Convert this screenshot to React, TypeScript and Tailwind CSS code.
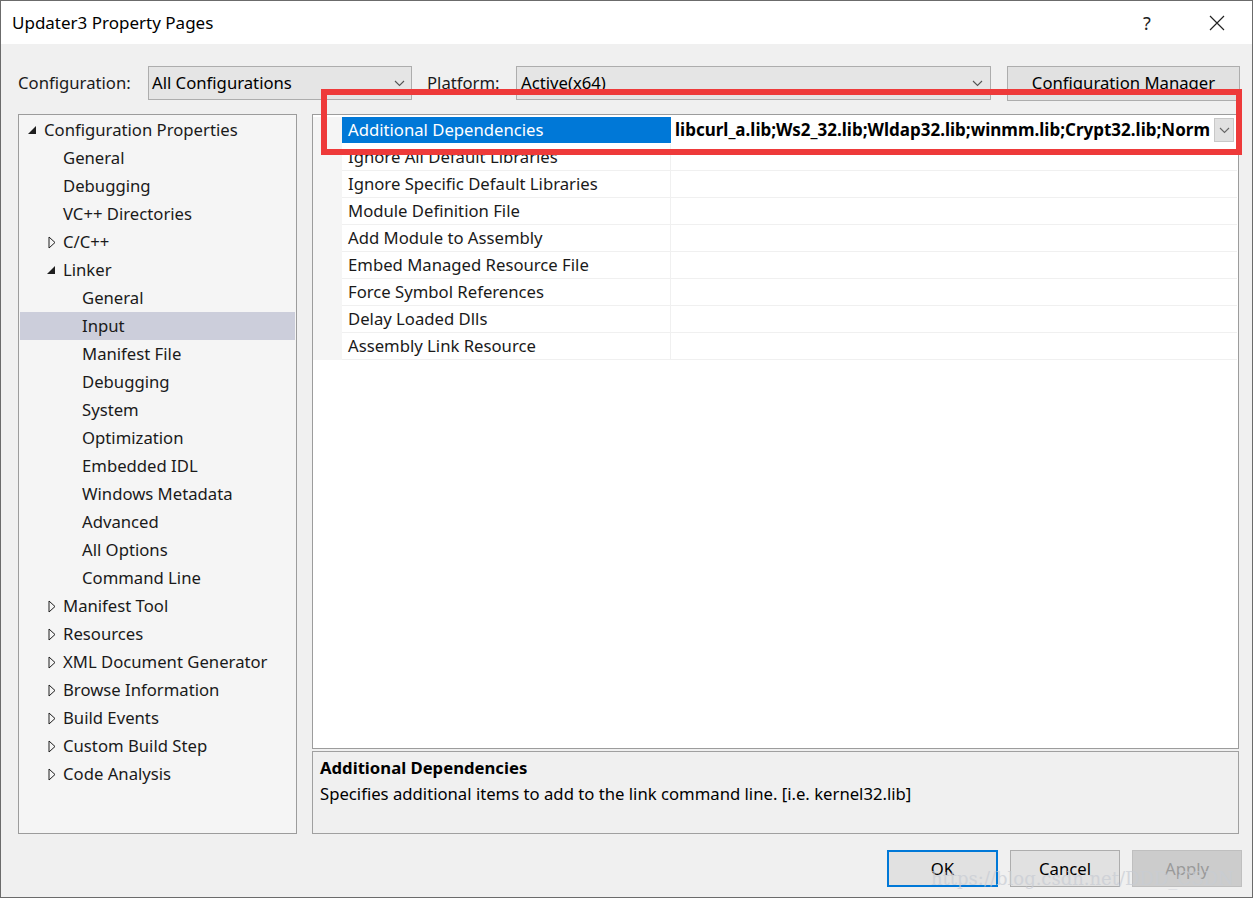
import React from "react";

const FONT = { fontFamily: '"Segoe UI", "Noto Sans", "Open Sans", sans-serif' };

function Chevron({ color = "#555" }: { color?: string }) {
  return (
    <svg width="11" height="7" viewBox="0 0 11 7">
      <path d="M1 1 L5.5 5.5 L10 1" fill="none" stroke={color} strokeWidth="1.1" />
    </svg>
  );
}

function Expanded() {
  return (
    <svg width="10" height="10" viewBox="0 0 10 10">
      <polygon points="9,1 9,9 1,9" fill="#1e1e1e" />
    </svg>
  );
}

function Collapsed() {
  return (
    <svg width="8" height="13" viewBox="0 0 8 13">
      <polygon points="1,1 7,6.5 1,12" fill="none" stroke="#1e1e1e" strokeWidth="1" />
    </svg>
  );
}

type TreeItem = { label: string; level: number; arrow?: "open" | "closed"; selected?: boolean };

const tree: TreeItem[] = [
  { label: "Configuration Properties", level: 0, arrow: "open" },
  { label: "General", level: 1 },
  { label: "Debugging", level: 1 },
  { label: "VC++ Directories", level: 1 },
  { label: "C/C++", level: 1, arrow: "closed" },
  { label: "Linker", level: 1, arrow: "open" },
  { label: "General", level: 2 },
  { label: "Input", level: 2, selected: true },
  { label: "Manifest File", level: 2 },
  { label: "Debugging", level: 2 },
  { label: "System", level: 2 },
  { label: "Optimization", level: 2 },
  { label: "Embedded IDL", level: 2 },
  { label: "Windows Metadata", level: 2 },
  { label: "Advanced", level: 2 },
  { label: "All Options", level: 2 },
  { label: "Command Line", level: 2 },
  { label: "Manifest Tool", level: 1, arrow: "closed" },
  { label: "Resources", level: 1, arrow: "closed" },
  { label: "XML Document Generator", level: 1, arrow: "closed" },
  { label: "Browse Information", level: 1, arrow: "closed" },
  { label: "Build Events", level: 1, arrow: "closed" },
  { label: "Custom Build Step", level: 1, arrow: "closed" },
  { label: "Code Analysis", level: 1, arrow: "closed" },
];

const props = [
  "Ignore All Default Libraries",
  "Ignore Specific Default Libraries",
  "Module Definition File",
  "Add Module to Assembly",
  "Embed Managed Resource File",
  "Force Symbol References",
  "Delay Loaded Dlls",
  "Assembly Link Resource",
];

export default function App() {
  return (
    <div
      className="relative w-[1253px] h-[898px] overflow-hidden bg-[#f0f0f0] border border-[#6b6b6b] flex flex-col text-[16.7px] text-[#1a1a1a]"
      style={FONT}
    >
      {/* Title bar */}
      <div className="h-[43px] bg-white flex items-center shrink-0">
        <div className="pl-[11px] text-[17px] text-black flex-1 leading-none">Updater3 Property Pages</div>
        <div className="w-[70px] flex justify-center text-[18px] text-[#222] leading-none">?</div>
        <div className="w-[70px] flex justify-center">
          <svg width="16" height="16" viewBox="0 0 16 16">
            <path d="M1 1 L15 15 M15 1 L1 15" stroke="#222" strokeWidth="1.2" />
          </svg>
        </div>
      </div>

      {/* Config row */}
      <div className="flex items-center pl-[17px] pr-[12px] pt-[22px] h-[56px] shrink-0">
        <div className="w-[130px] shrink-0">Configuration:</div>
        <div className="w-[264px] h-[34px] shrink-0 bg-[#e5e5e5] border border-[#adadad] flex items-center pl-[3px] pr-[6px]">
          <span className="flex-1 text-black">All Configurations</span>
          <Chevron />
        </div>
        <div className="w-[104px] shrink-0 pl-[15px]">Platform:</div>
        <div className="w-[475px] h-[34px] shrink-0 bg-[#e5e5e5] border border-[#adadad] flex items-center pl-[4px] pr-[7px]">
          <span className="flex-1 text-black">Active(x64)</span>
          <Chevron />
        </div>
        <div className="ml-[16px] w-[233px] h-[35px] shrink-0 bg-[#e1e1e1] border border-[#adadad] flex items-center justify-center text-black">
          Configuration Manager
        </div>
      </div>

      {/* Main */}
      <div className="flex pl-[17px] pr-[13px] pt-[14px] gap-[15px] shrink-0">
        {/* Tree */}
        <div className="w-[279px] h-[720px] shrink-0 bg-[#f5f5f5] border border-[#9c9c9c] pt-[1px] px-[1px]">
          {tree.map((t, i) => (
            <div
              key={i}
              className={`h-[28px] flex items-center ${t.selected ? "bg-[#cccedb]" : ""}`}
            >
              <div
                className="flex items-center justify-end shrink-0"
                style={{ width: t.level === 0 ? 17 : t.level === 1 ? 36 : 55 }}
              >
                {t.arrow === "open" ? <Expanded /> : t.arrow === "closed" ? <Collapsed /> : null}
              </div>
              <span className="pl-[7px] whitespace-nowrap">{t.label}</span>
            </div>
          ))}
        </div>

        {/* Right */}
        <div className="flex-1 min-w-0 flex flex-col gap-[2px]">
          <div className="h-[635px] bg-white border border-[#9c9c9c] pt-[2px] pr-[1px]">
            <div className="flex h-[27px]">
              <div className="w-[29px] shrink-0 bg-[#f5f5f5]" />
              <div className="w-[329px] shrink-0 bg-[#0078d7] text-white flex items-center pl-[6px] border-b border-white">
                Additional Dependencies
              </div>
              <div className="flex-1 min-w-0 flex items-center pl-[4px] border-b border-white overflow-hidden">
                <span className="font-bold text-black whitespace-nowrap overflow-hidden flex-1 min-w-0 text-[17px]">
                  libcurl_a.lib;Ws2_32.lib;Wldap32.lib;winmm.lib;Crypt32.lib;Norm
                </span>
                <div className="w-[20px] h-[24px] bg-[#e1e1e1] border border-[#c8c8c8] flex items-center justify-center mr-[3px] shrink-0">
                  <Chevron color="#666" />
                </div>
              </div>
            </div>
            {props.map((p) => (
              <div key={p} className="flex h-[27px]">
                <div className="w-[29px] shrink-0 bg-[#f5f5f5]" />
                <div className="w-[329px] shrink-0 flex items-center pl-[6px] border-b border-r border-[#f0f0f0] whitespace-nowrap">
                  {p}
                </div>
                <div className="flex-1 border-b border-[#f0f0f0]" />
              </div>
            ))}
          </div>
          <div className="h-[83px] bg-[#f0f0f0] border border-[#a0a0a0] px-[7px] pt-[3px] text-black">
            <div className="font-bold leading-[26px]">Additional Dependencies</div>
            <div className="leading-[26px]">Specifies additional items to add to the link command line. [i.e. kernel32.lib]</div>
          </div>
        </div>
      </div>

      {/* Buttons */}
      <div className="flex justify-end pr-[10px] pt-[16px] gap-[12px]">
        <div className="w-[111px] h-[37px] bg-[#e1e1e1] border-2 border-[#0078d7] flex items-center justify-center text-black">
          OK
        </div>
        <div className="w-[110px] h-[37px] bg-[#e1e1e1] border border-[#adadad] flex items-center justify-center text-black">
          Cancel
        </div>
        <div className="w-[110px] h-[37px] bg-[#cccccc] border border-[#bfbfbf] flex items-center justify-center text-[#9a9a9a]">
          Apply
        </div>
      </div>

      {/* Watermark */}
      <div
        className="absolute left-[930px] top-[864px] text-[18px] text-[#c8ccd4] opacity-70 pointer-events-none whitespace-nowrap"
        style={{ fontFamily: '"DejaVu Serif", "Liberation Serif", serif' }}
      >
        https://blog.csdn.net/DDD_CSDN
      </div>

      {/* Red highlight box */}
      <div className="absolute left-[320px] top-[88px] w-[921px] h-[66px] border-[6px] border-[#ee3a3a] pointer-events-none" />
    </div>
  );
}
